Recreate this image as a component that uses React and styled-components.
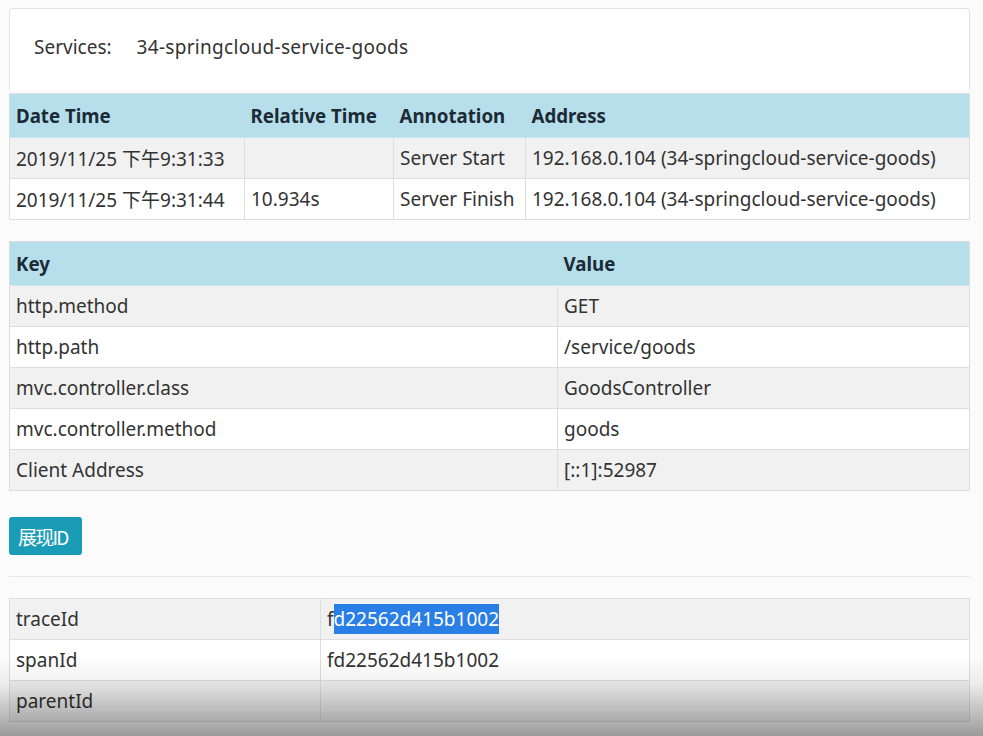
import React from "react";
import styled, { createGlobalStyle } from "styled-components";

const Global = createGlobalStyle`
  html, body { margin: 0; padding: 0; background: #fbfbfb; }
  body {
    font-family: "Noto Sans", "Open Sans", "Noto Sans CJK SC", sans-serif;
    font-size: 19px;
    color: #333;
    height: 736px;
    overflow: hidden;
  }
`;

const Page = styled.div`
  width: 961px;
  padding: 8px 0 0 9px;
  display: flex;
  flex-direction: column;
`;

const Panel = styled.div`
  height: 82px;
  box-sizing: border-box;
  background: #fff;
  border: 1px solid #e2e2e2;
  border-bottom: none;
  border-radius: 4px 4px 0 0;
  display: flex;
  align-items: center;
  padding: 0 0 6px 24px;
  font-size: 19px;
  color: #333;
`;

const Label = styled.span`
  margin-right: 25px;
`;

const Value = styled.span`
  letter-spacing: 0.3px;
`;

const Table = styled.table`
  width: 100%;
  border-collapse: collapse;
  background: #fff;
  margin-top: ${(p) => p.$mt || 0}px;
  border: 1px solid #dedede;
  table-layout: fixed;
`;

const Th = styled.th`
  background: #b6dfeb;
  color: #1c2a36;
  font-weight: 700;
  text-align: left;
  height: 43px;
  padding: 0 6px;
  font-size: 18.7px;
  border-bottom: 1px solid #cfe6ee;
  white-space: nowrap;
`;

const Tr = styled.tr`
  background: ${(p) => (p.$striped ? "#f1f1f1" : "#fff")};
`;

const Td = styled.td`
  height: 40px;
  padding: 0 6px;
  font-size: 19px;
  color: #333;
  border: 1px solid #dedede;
  white-space: nowrap;
  overflow: hidden;
`;

const Button = styled.button`
  align-self: flex-start;
  margin-top: 26px;
  width: 73px;
  height: 38px;
  border: none;
  border-radius: 3px;
  background: #1b9cb6;
  color: #fff;
  font-family: "Noto Sans CJK SC", "Noto Sans", sans-serif;
  font-size: 19px;
  letter-spacing: -1.8px;
  padding: 0 0 0 9px;
  text-align: left;
`;

const Rule = styled.hr`
  margin: 21px 0 21px;
  border: none;
  border-top: 1px solid #e8e8e8;
  width: 100%;
`;

const Selected = styled.span`
  background: #2a7fe6;
  color: #fff;
  padding: 2px 0;
`;

const Shade = styled.div`
  position: fixed;
  left: 0;
  right: 0;
  bottom: 0;
  height: 80px;
  pointer-events: none;
  background: linear-gradient(
    to bottom,
    rgba(0, 0, 0, 0) 0%,
    rgba(0, 0, 0, 0.06) 35%,
    rgba(0, 0, 0, 0.38) 100%
  );
`;

const annotations = [
  ["2019/11/25 下午9:31:33", "", "Server Start", "192.168.0.104 (34-springcloud-service-goods)"],
  ["2019/11/25 下午9:31:44", "10.934s", "Server Finish", "192.168.0.104 (34-springcloud-service-goods)"],
];

const tags = [
  ["http.method", "GET"],
  ["http.path", "/service/goods"],
  ["mvc.controller.class", "GoodsController"],
  ["mvc.controller.method", "goods"],
  ["Client Address", "[::1]:52987"],
];

export default function App() {
  return (
    <>
      <Global />
      <Page>
        <Panel>
          <Label>Services:</Label>
          <Value>34-springcloud-service-goods</Value>
        </Panel>
        <Table $mt={3}>
          <colgroup>
            <col style={{ width: 235 }} />
            <col style={{ width: 149 }} />
            <col style={{ width: 132 }} />
            <col />
          </colgroup>
          <thead>
            <tr>
              <Th>Date Time</Th>
              <Th>Relative Time</Th>
              <Th>Annotation</Th>
              <Th>Address</Th>
            </tr>
          </thead>
          <tbody>
            {annotations.map((r, i) => (
              <Tr key={i} $striped={i % 2 === 0}>
                {r.map((c, j) => (
                  <Td key={j}>{c}</Td>
                ))}
              </Tr>
            ))}
          </tbody>
        </Table>
        <Table $mt={21}>
          <colgroup>
            <col style={{ width: 548 }} />
            <col />
          </colgroup>
          <thead>
            <tr>
              <Th>Key</Th>
              <Th>Value</Th>
            </tr>
          </thead>
          <tbody>
            {tags.map((r, i) => (
              <Tr key={i} $striped={i % 2 === 0}>
                <Td>{r[0]}</Td>
                <Td>{r[1]}</Td>
              </Tr>
            ))}
          </tbody>
        </Table>
        <Button>展现ID</Button>
        <Rule />
        <Table>
          <colgroup>
            <col style={{ width: 311 }} />
            <col />
          </colgroup>
          <tbody>
            <Tr $striped>
              <Td>traceId</Td>
              <Td>
                f<Selected>d22562d415b1002</Selected>
              </Td>
            </Tr>
            <Tr>
              <Td>spanId</Td>
              <Td>fd22562d415b1002</Td>
            </Tr>
            <Tr $striped>
              <Td>parentId</Td>
              <Td></Td>
            </Tr>
          </tbody>
        </Table>
      </Page>
      <Shade />
    </>
  );
}
